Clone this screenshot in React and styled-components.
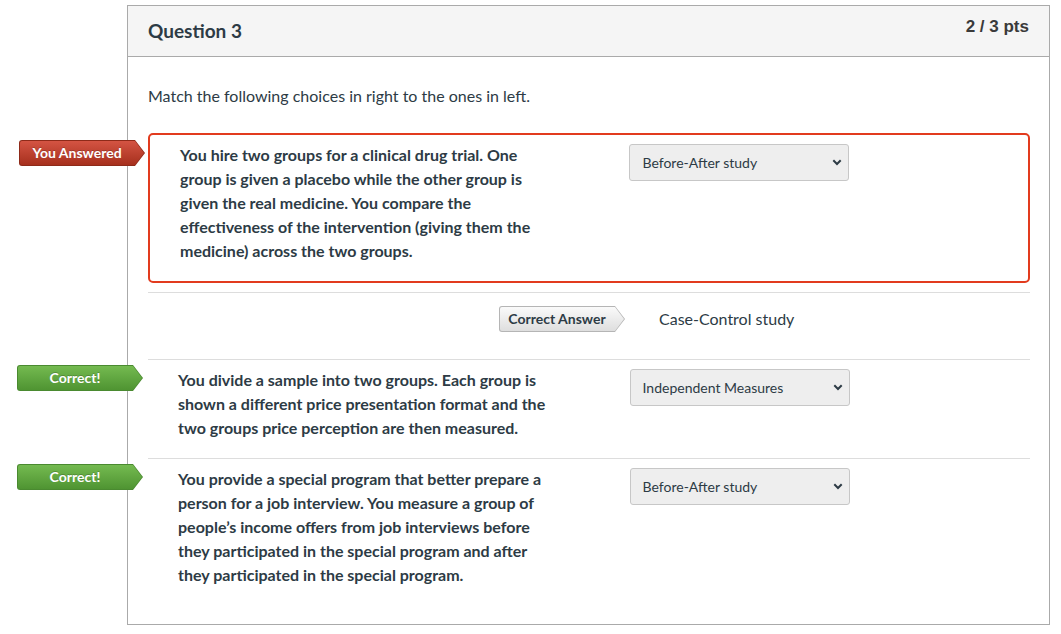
import React from 'react'
import styled, { createGlobalStyle } from 'styled-components'

const GlobalStyle = createGlobalStyle`
  html, body {
    margin: 0;
    padding: 0;
    background: #ffffff;
  }
  body {
    font-family: Lato, "Open Sans", sans-serif;
    color: #2d3b45;
  }
`

const Page = styled.div`
  padding: 5px 0 0 127px;
`

const Card = styled.div`
  box-sizing: border-box;
  width: 923px;
  border: 1px solid #aaaaaa;
  background: #fff;
`

const Header = styled.div`
  display: flex;
  justify-content: space-between;
  align-items: flex-start;
  height: 51px;
  box-sizing: border-box;
  padding: 0 20px;
  background: #f5f5f5;
  border-bottom: 1px solid #aaaaaa;
`

const Title = styled.h2`
  margin: 13px 0 0;
  font-size: 19px;
  font-weight: 700;
  line-height: 24px;
  color: #2d3b45;
`

const Points = styled.div`
  margin-top: 11px;
  font-family: "Liberation Sans", Arial, sans-serif;
  font-size: 17px;
  font-weight: 700;
  line-height: 20px;
  color: #3a3a3a;
`

const Body = styled.div`
  padding: 27px 19px 19px 20px;
`

const Prompt = styled.p`
  margin: 0 0 25px;
  font-size: 16px;
  line-height: 24px;
`

const AnswerRow = styled.div`
  position: relative;
  display: grid;
  grid-template-columns: 53% auto;
  align-items: start;
  padding: 8px 0 18px 30px;
  border: ${({ $wrong }) => ($wrong ? '2px solid #e23b1e' : 'none')};
  border-top: ${({ $wrong }) => ($wrong ? '2px solid #e23b1e' : '1px solid #dddddd')};
  border-radius: ${({ $wrong }) => ($wrong ? '5px' : '0')};
  margin-bottom: ${({ $wrong }) => ($wrong ? '9px' : '0')};
`

const AnswerText = styled.div`
  max-width: 378px;
  font-size: 16px;
  font-weight: 700;
  line-height: 24px;
  color: #2d3b45;
`

const TagOuter = styled.div`
  display: inline-block;
  padding: 1px;
  background: ${({ $edge }) => $edge};
  border-radius: 3px 0 0 3px;
  clip-path: polygon(0 0, calc(100% - 10px) 0, 100% 50%, calc(100% - 10px) 100%, 0 100%);
`

const TagInner = styled.div`
  box-sizing: border-box;
  width: 124px;
  height: 24px;
  padding: 0 10px 1px 0;
  display: flex;
  align-items: center;
  justify-content: center;
  background: linear-gradient(${({ $top }) => $top}, ${({ $bottom }) => $bottom});
  border-radius: 2px 0 0 2px;
  clip-path: polygon(0 0, calc(100% - 9px) 0, 100% 50%, calc(100% - 9px) 100%, 0 100%);
  color: ${({ $ink }) => $ink};
  font-size: 14px;
  font-weight: 700;
  text-shadow: ${({ $ink }) => ($ink === '#fff' ? '0 -1px 0 rgba(0,0,0,0.2)' : 'none')};
`

const SideTag = styled.div`
  position: absolute;
  left: -131px;
  top: 5px;
`

const tagColors = {
  wrong: { edge: '#8e2a19', top: '#d45443', bottom: '#a6301d', ink: '#fff' },
  correct: { edge: '#4a8a30', top: '#74ba50', bottom: '#4f9432', ink: '#fff' },
  answer: { edge: '#b5b5b5', top: '#fafafa', bottom: '#dedede', ink: '#2d3b45' },
}

const Tag = ({ kind, children }) => {
  const c = tagColors[kind]
  return (
    <TagOuter $edge={c.edge}>
      <TagInner $top={c.top} $bottom={c.bottom} $ink={c.ink}>
        {children}
      </TagInner>
    </TagOuter>
  )
}

const SelectWrap = styled.div`
  position: relative;
  width: 220px;
  margin-top: 1px;
`

const Select = styled.select`
  appearance: none;
  -webkit-appearance: none;
  box-sizing: border-box;
  width: 220px;
  height: 37px;
  padding: 0 28px 0 12px;
  border: 1px solid #c7c7c7;
  border-radius: 3px;
  background: #eeeeee;
  font-family: Lato, "Open Sans", sans-serif;
  font-size: 14px;
  color: #2d3b45;
  outline: none;
`

const Chevron = styled.svg`
  position: absolute;
  right: 7px;
  top: 15px;
  pointer-events: none;
`

const CorrectRow = styled.div`
  display: flex;
  align-items: center;
  padding: 13px 0 27px 351px;
  border-top: 1px solid #dddddd;
`

const CorrectText = styled.span`
  margin-left: 34px;
  font-size: 16px;
  line-height: 24px;
  color: #2d3b45;
`

const options = [
  '[ Choose ]',
  'Before-After study',
  'Case-Control study',
  'Independent Measures',
]

const Dropdown = ({ value }) => (
  <SelectWrap>
    <Select defaultValue={value}>
      {options.map((o) => (
        <option key={o}>{o}</option>
      ))}
    </Select>
    <Chevron width="10" height="7" viewBox="0 0 10 7">
      <path d="M1.3 1.3 L5 5 L8.7 1.3" fill="none" stroke="#2d3b45" strokeWidth="2" />
    </Chevron>
  </SelectWrap>
)

const App = () => {
  return (
    <Page>
      <GlobalStyle />
      <Card>
        <Header>
          <Title>Question 3</Title>
          <Points>2 / 3 pts</Points>
        </Header>
        <Body>
          <Prompt>Match the following choices in right to the ones in left.</Prompt>

          <AnswerRow $wrong>
            <SideTag>
              <Tag kind="wrong">You Answered</Tag>
            </SideTag>
            <AnswerText>
              You hire two groups for a clinical drug trial. One group is given a
              placebo while the other group is given the real medicine. You compare
              the effectiveness of the intervention (giving them the medicine) across
              the two groups.
            </AnswerText>
            <Dropdown value="Before-After study" />
          </AnswerRow>

          <CorrectRow>
            <Tag kind="answer">Correct Answer</Tag>
            <CorrectText>Case-Control study</CorrectText>
          </CorrectRow>

          <AnswerRow>
            <SideTag>
              <Tag kind="correct">Correct!</Tag>
            </SideTag>
            <AnswerText>
              You divide a sample into two groups. Each group is shown a different
              price presentation format and the two groups price perception are then
              measured.
            </AnswerText>
            <Dropdown value="Independent Measures" />
          </AnswerRow>

          <AnswerRow>
            <SideTag>
              <Tag kind="correct">Correct!</Tag>
            </SideTag>
            <AnswerText>
              You provide a special program that better prepare a person for a job
              interview. You measure a group of people’s income offers from job
              interviews before they participated in the special program and after
              they participated in the special program.
            </AnswerText>
            <Dropdown value="Before-After study" />
          </AnswerRow>
        </Body>
      </Card>
    </Page>
  )
}

export default App
